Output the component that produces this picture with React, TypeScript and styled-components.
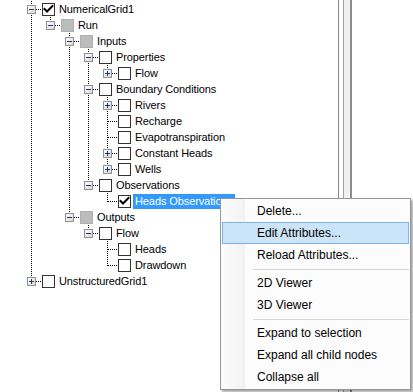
import React from "react";
import styled, { createGlobalStyle } from "styled-components";

const Global = createGlobalStyle`
  html, body { margin: 0; padding: 0; background: #ffffff; }
  body { font-family: "Liberation Sans", Arial, sans-serif; }
`;

type Check = "on" | "off" | "gray";
type TNode = {
  label: string;
  check?: Check;
  open?: boolean;
  closed?: boolean;
  selected?: boolean;
  children?: TNode[];
};

const tree: TNode[] = [
  {
    label: "NumericalGrid1",
    check: "on",
    open: true,
    children: [
      {
        label: "Run",
        check: "gray",
        open: true,
        children: [
          {
            label: "Inputs",
            check: "gray",
            open: true,
            children: [
              { label: "Properties", open: true, children: [{ label: "Flow", closed: true }] },
              {
                label: "Boundary Conditions",
                open: true,
                children: [
                  { label: "Rivers", closed: true },
                  { label: "Recharge" },
                  { label: "Evapotranspiration" },
                  { label: "Constant Heads", closed: true },
                  { label: "Wells", closed: true },
                ],
              },
              {
                label: "Observations",
                open: true,
                children: [{ label: "Heads Observations", check: "on", selected: true }],
              },
            ],
          },
          {
            label: "Outputs",
            check: "gray",
            open: true,
            children: [
              {
                label: "Flow",
                open: true,
                children: [{ label: "Heads" }, { label: "Drawdown" }],
              },
            ],
          },
        ],
      },
    ],
  },
  { label: "UnstructuredGrid1", closed: true },
];

type FlatRow = { node: TNode; guides: boolean[]; hasNext: boolean };

function flatten(nodes: TNode[], guides: boolean[], out: FlatRow[]) {
  nodes.forEach((n, i) => {
    const hasNext = i < nodes.length - 1;
    out.push({ node: n, guides, hasNext });
    if (n.open && n.children) flatten(n.children, [...guides, hasNext], out);
  });
  return out;
}

const rows = flatten(tree, [], []);

const LINE = "#000000";

const Page = styled.div`
  position: relative;
  width: 413px;
  height: 392px;
  overflow: hidden;
  display: flex;
  background: #ffffff;
`;

const TreePane = styled.div`
  width: 339px;
  border-right: 1px solid #828790;
  padding-top: 1px;
  box-sizing: border-box;
  flex: none;
`;

const Splitter = styled.div`
  flex: none;
  margin-left: 4px;
  width: 6px;
  background: #f0f0f0;
  border-left: 1px solid #a0a0a0;
  border-right: 2px solid #8c8c8c;
`;

const RightPane = styled.div`
  flex: 1;
  background: #ffffff;
`;

const Row = styled.div`
  display: flex;
  align-items: center;
  height: 16px;
  padding-left: 22px;
`;

const Cell = styled.svg`
  flex: none;
  width: 19px;
  height: 16px;
  display: block;
`;

const Box = styled.span<{ $state: Check }>`
  flex: none;
  box-sizing: border-box;
  width: 13px;
  height: 13px;
  margin-left: 1px;
  border: 1px solid ${(p) => (p.$state === "gray" ? "#b0b0b0" : "#333333")};
  background: ${(p) => (p.$state === "gray" ? "#bcbcbc" : "#ffffff")};
  display: flex;
  align-items: center;
  justify-content: center;
`;

const Label = styled.span<{ $selected?: boolean }>`
  margin-left: 2px;
  padding: 0 2px;
  height: 15px;
  line-height: 15px;
  font-size: 11px;
  letter-spacing: -0.1px;
  white-space: nowrap;
  color: ${(p) => (p.$selected ? "#ffffff" : "#000000")};
  background: ${(p) => (p.$selected ? "#3399ff" : "transparent")};
`;

const Menu = styled.div`
  position: absolute;
  left: 220px;
  top: 198px;
  width: 191px;
  box-sizing: border-box;
  border: 1px solid #979797;
  padding: 1px 0 1px 0;
  background: linear-gradient(
    to right,
    #fcfcfc 0px,
    #f4f4f4 20px,
    #f0f0f0 23px,
    #fcfcfc 25px,
    #fcfcfc 100%
  );
  box-shadow: 2px 2px 2px rgba(0, 0, 0, 0.35);
  font-family: "Liberation Sans", Arial, sans-serif;
`;

const Item = styled.div<{ $active?: boolean }>`
  box-sizing: border-box;
  height: 22px;
  margin: 0 1px;
  padding-left: 34px;
  display: flex;
  align-items: center;
  font-size: 12px;
  color: #000000;
  border: 1px solid ${(p) => (p.$active ? "#7eb4ea" : "transparent")};
  background: ${(p) => (p.$active ? "#cce4f7" : "transparent")};
`;

const Sep = styled.div`
  height: 6px;
  display: flex;
  align-items: center;
  padding-left: 32px;
  padding-right: 1px;
  &::after {
    content: "";
    flex: 1;
    height: 1px;
    background: #d7d7d7;
  }
`;

function Guide({ on }: { on: boolean }) {
  return (
    <Cell viewBox="0 0 19 16">
      {on && (
        <line x1={9.5} y1={0} x2={9.5} y2={16} stroke={LINE} strokeDasharray="1 1" shapeRendering="crispEdges" />
      )}
    </Cell>
  );
}

function Elbow({ hasNext, expander }: { hasNext: boolean; expander?: "open" | "closed" }) {
  return (
    <Cell viewBox="0 0 19 16">
      <line x1={9.5} y1={0} x2={9.5} y2={hasNext ? 16 : 9} stroke={LINE} strokeDasharray="1 1" shapeRendering="crispEdges" />
      <line x1={10} y1={8.5} x2={19} y2={8.5} stroke={LINE} strokeDasharray="1 1" shapeRendering="crispEdges" />
      {expander && (
        <g shapeRendering="crispEdges">
          <defs>
            <linearGradient id="exg" x1="0" y1="0" x2="1" y2="1">
              <stop offset="0" stopColor="#ffffff" />
              <stop offset="1" stopColor="#d6d6d6" />
            </linearGradient>
          </defs>
          <rect x={5.5} y={4.5} width={8} height={8} fill="url(#exg)" stroke="#919191" />
          <line x1={7} y1={8.5} x2={12} y2={8.5} stroke="#1e3a6e" />
          {expander === "closed" && <line x1={9.5} y1={6} x2={9.5} y2={11} stroke="#1e3a6e" />}
        </g>
      )}
    </Cell>
  );
}

function CheckMark() {
  return (
    <svg width="11" height="11" viewBox="0 0 11 11" style={{ display: "block" }}>
      <path d="M1.5 5 L4 7.5 L9.5 2" fill="none" stroke="#000" strokeWidth={2} strokeLinecap="square" />
    </svg>
  );
}

export default function App() {
  return (
    <>
      <Global />
      <Page>
        <TreePane>
          {rows.map((r, i) => (
            <Row key={i}>
              {r.guides.map((g, j) => (
                <Guide key={j} on={g} />
              ))}
              <Elbow
                hasNext={r.hasNext}
                expander={r.node.open ? "open" : r.node.closed ? "closed" : undefined}
              />
              <Box $state={r.node.check ?? "off"}>{r.node.check === "on" && <CheckMark />}</Box>
              <Label $selected={r.node.selected}>{r.node.label}</Label>
            </Row>
          ))}
        </TreePane>
        <Splitter />
        <RightPane />
        <Menu>
          <Item>Delete...</Item>
          <Item $active>Edit Attributes...</Item>
          <Item>Reload Attributes...</Item>
          <Sep />
          <Item>2D Viewer</Item>
          <Item>3D Viewer</Item>
          <Sep />
          <Item>Expand to selection</Item>
          <Item>Expand all child nodes</Item>
          <Item>Collapse all</Item>
        </Menu>
      </Page>
    </>
  );
}
